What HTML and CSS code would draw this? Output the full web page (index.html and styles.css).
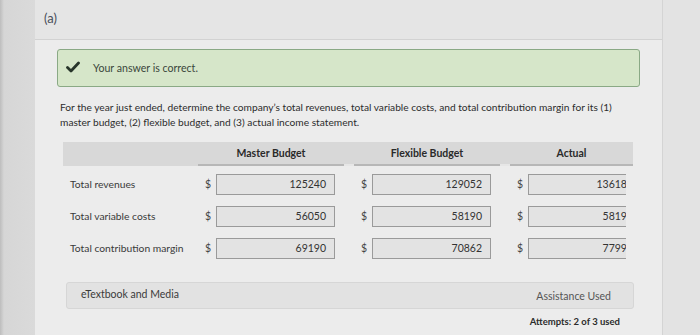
FILE: index.html
```html
<!DOCTYPE html>
<html>
<head>
<meta charset="utf-8">
<link rel="stylesheet" href="styles.css">
</head>
<body>
<div class="screen">
  <div class="edge-left"></div>
  <div class="panel">
    <div class="part-head">(a)</div>
    <div class="part-body">
      <div class="correct">
        <svg class="check" width="14" height="12" viewBox="0 0 14 12"><path d="M1.5 6.5 L5 10 L12.5 2" fill="none" stroke="#27352a" stroke-width="2.8" stroke-linecap="round" stroke-linejoin="round"/></svg>
        <span>Your answer is correct.</span>
      </div>
      <p class="question">For the year just ended, determine the company’s total revenues, total variable costs, and total contribution margin for its (1) master budget, (2) flexible budget, and (3) actual income statement.</p>
      <div class="table-wrap">
        <div class="grid">
          <div class="hcell hblank"></div>
          <div class="hcell"><span>Master Budget</span></div>
          <div class="hgap"></div>
          <div class="hcell"><span>Flexible Budget</span></div>
          <div class="hgap"></div>
          <div class="hcell"><span>Actual</span></div>

          <div class="label">Total revenues</div>
          <div class="cell"><span class="cur">$</span><div class="input">125240</div></div>
          <div></div>
          <div class="cell"><span class="cur">$</span><div class="input">129052</div></div>
          <div></div>
          <div class="cell clip"><span class="cur">$</span><div class="input">136188</div></div>

          <div class="label">Total variable costs</div>
          <div class="cell"><span class="cur">$</span><div class="input">56050</div></div>
          <div></div>
          <div class="cell"><span class="cur">$</span><div class="input">58190</div></div>
          <div></div>
          <div class="cell clip"><span class="cur">$</span><div class="input">58190</div></div>

          <div class="label">Total contribution margin</div>
          <div class="cell"><span class="cur">$</span><div class="input">69190</div></div>
          <div></div>
          <div class="cell"><span class="cur">$</span><div class="input">70862</div></div>
          <div></div>
          <div class="cell clip"><span class="cur">$</span><div class="input">77998</div></div>
        </div>
      </div>
      <div class="media-bar">
        <span>eTextbook and Media</span>
        <span class="assist">Assistance Used</span>
      </div>
      <div class="attempts">Attempts: 2 of 3 used</div>
    </div>
  </div>
  <div class="edge-right"></div>
</div>
</body>
</html>
```

FILE: styles.css
```css
html, body {
  margin: 0;
  padding: 0;
}
body {
  width: 700px;
  height: 335px;
  overflow: hidden;
  background: #dedede;
  font-family: Lato, "Open Sans", sans-serif;
  color: #333;
}
.screen {
  display: flex;
  height: 335px;
}
.edge-left {
  width: 35px;
  flex: none;
  background: linear-gradient(to right, #bdbdbd 0, #d6d6d6 4px, #dadada 100%);
}
.panel {
  width: 627px;
  flex: none;
  background: #ececec;
  display: flex;
  flex-direction: column;
}
.edge-right {
  flex: 1;
  background: #e3e3e3;
  border-left: 1px solid #d4d4d4;
}
.part-head {
  height: 40px;
  box-sizing: border-box;
  padding: 10px 0 0 9px;
  font-size: 13px;
  color: #4a4f5a;
  background: #e5e5e5;
  border-bottom: 1px solid #d2d2d2;
}
.part-body {
  padding: 9px 0 0 22px;
}
.correct {
  width: 583px;
  height: 38px;
  box-sizing: border-box;
  background: #d6e6c9;
  border: 1px solid #8aa985;
  border-radius: 3px;
  display: flex;
  align-items: center;
  padding-left: 8px;
  font-size: 10.6px;
  color: #3b463b;
}
.check {
  margin-right: 13px;
  margin-top: -2px;
}
.question {
  margin: 13px 0 0 3px;
  width: 570px;
  font-size: 10.2px;
  line-height: 15px;
  color: #2d2d2d;
}
.table-wrap {
  margin: 12px 0 0 6px;
  width: 570px;
  overflow: hidden;
}
.grid {
  display: grid;
  grid-template-columns: 135px 146px 10px 146px 10px 123px;
  grid-template-rows: 24px 32px 32px 32px;
}
.hcell, .hgap {
  background: #d8d8d8;
}
.hcell {
  display: flex;
  align-items: center;
  justify-content: center;
  font-size: 10.5px;
  font-weight: bold;
  color: #2a2a2a;
  border-bottom: 2px solid #b7b7b7;
  padding-bottom: 1px;
}
.hblank {
  border-bottom: 2px solid #d8d8d8;
}
.hgap {
  border-bottom: 2px solid #e6e6e6;
}
.label {
  font-size: 10.3px;
  color: #3a3a3a;
  display: flex;
  align-items: center;
  padding-left: 7px;
  padding-top: 4px;
}
.cell {
  display: flex;
  align-items: center;
  padding-top: 4px;
}
.clip {
  overflow: hidden;
  margin-right: 7px;
}
.cur {
  width: 18px;
  flex: none;
  padding-left: 7px;
  box-sizing: border-box;
  font-size: 10.5px;
  color: #444;
}
.input {
  width: 119px;
  flex: none;
  height: 21px;
  box-sizing: border-box;
  border: 1px solid #9a9a9a;
  background: #e3e3e3;
  text-align: right;
  padding-right: 8px;
  font-size: 10.5px;
  line-height: 19px;
  color: #333;
}
.clip .input {
  width: 114px;
}
.media-bar {
  margin: 20px 0 0 9px;
  width: 568px;
  height: 27px;
  box-sizing: border-box;
  background: #e2e2e2;
  border: 1px solid #d6d6d6;
  border-radius: 3px;
  display: flex;
  justify-content: space-between;
  padding: 5px 22px 0 14px;
  font-size: 10.5px;
  color: #3a3a3a;
}
.assist {
  color: #555;
  padding-top: 2px;
}
.attempts {
  width: 563px;
  text-align: right;
  margin-top: 7px;
  font-size: 9.5px;
  font-weight: bold;
  color: #2b2b2b;
}
```
